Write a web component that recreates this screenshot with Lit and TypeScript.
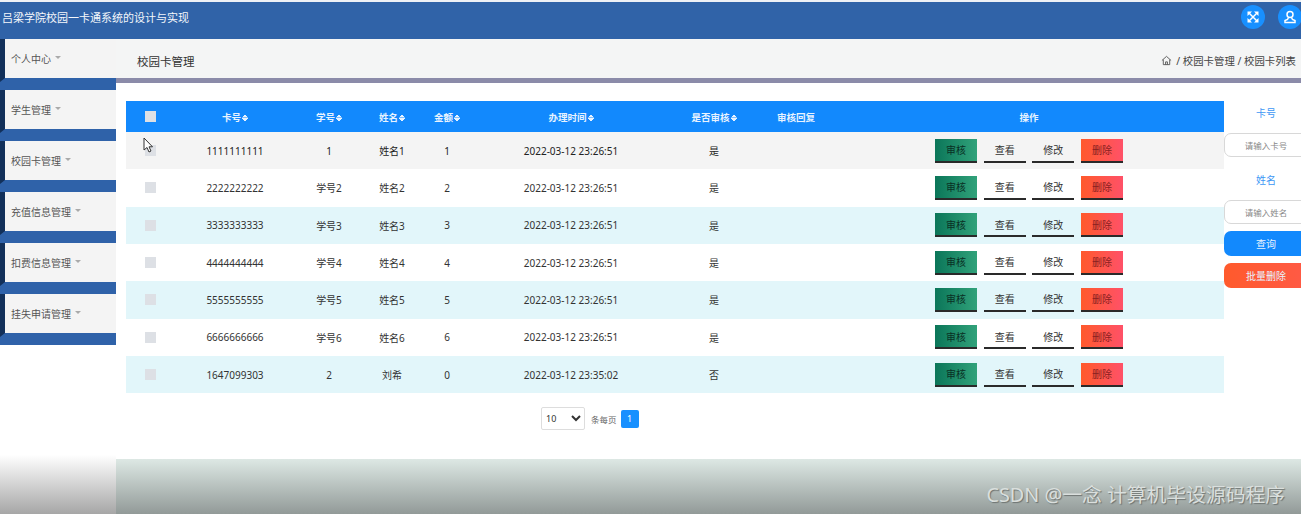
import { LitElement, html, css, svg } from "lit";
import { customElement } from "lit/decorators.js";

const rows = [
  ["1111111111", "1", "姓名1", "1", "2022-03-12 23:26:51", "是"],
  ["2222222222", "学号2", "姓名2", "2", "2022-03-12 23:26:51", "是"],
  ["3333333333", "学号3", "姓名3", "3", "2022-03-12 23:26:51", "是"],
  ["4444444444", "学号4", "姓名4", "4", "2022-03-12 23:26:51", "是"],
  ["5555555555", "学号5", "姓名5", "5", "2022-03-12 23:26:51", "是"],
  ["6666666666", "学号6", "姓名6", "6", "2022-03-12 23:26:51", "是"],
  ["1647099303", "2", "刘希", "0", "2022-03-12 23:35:02", "否"],
];
const menu = ["个人中心", "学生管理", "校园卡管理", "充值信息管理", "扣费信息管理", "挂失申请管理"];
const sort = html`<span class="sort"></span>`;

@customElement("app-root")
export class AppRoot extends LitElement {
  static styles = css`
    :host {
      display: flex;
      flex-direction: column;
      width: 1301px;
      height: 514px;
      overflow: hidden;
      position: relative;
      background: #fff;
      font-family: "Noto Sans", "Noto Sans CJK SC", sans-serif;
      font-size: 10px;
      color: #333;
    }
    .strip { height: 2px; background: #eef1f6; flex: none; }
    header {
      height: 37px;
      flex: none;
      background: #3063a8;
      display: flex;
      align-items: center;
      color: #f4f7fb;
      font-size: 11px;
      padding-left: 2px;
      padding-bottom: 7px;
      box-sizing: border-box;
    }
    .title { flex: 1; }
    .round {
      width: 24px; height: 24px; border-radius: 50%;
      background: #1890ff; display: flex; align-items: center; justify-content: center;
      margin-right: 13px;
      flex: none;
    }
    .round + .round { margin-right: -1px; }
    .round svg { width: 14px; height: 14px; fill: none; stroke: #fff; stroke-width: 1.5; }
    .round svg .solid { fill: #fff; stroke: none; }
    .body { flex: 1; display: flex; min-height: 0; }
    aside { width: 116px; flex: none; display: flex; flex-direction: column; }
    .menu { flex: 1; }
    .item { height: 51px; background: #2f62a9; position: relative; }
    .item .face {
      height: 39px;
      margin-left: 5px;
      background: #f4f4f4;
      display: flex;
      align-items: center;
      padding-left: 6px;
      font-size: 10px;
      color: #555;
      gap: 4px;
    }
    .item::before {
      content: "";
      position: absolute;
      left: 0; top: 0;
      width: 5px; height: 43px;
      background: #12305a;
      clip-path: polygon(0 0, 100% 0, 100% 39px, 0 43px);
    }
    .caret {
      width: 0; height: 0;
      border: 3px solid transparent;
      border-top-color: #aaa;
      border-bottom: none;
      margin-top: -2px;
    }
    .aside-foot { height: 59px; flex: none; background: linear-gradient(#fff, #a6a6a6); }
    main { flex: 1; min-width: 0; display: flex; flex-direction: column; }
    .crumbs {
      height: 39px; flex: none;
      background: #f4f5f5;
      display: flex; align-items: center; justify-content: space-between;
      padding: 4px 0 0 21px;
      box-sizing: border-box;
      font-size: 11.5px;
      color: #333;
    }
    .trail { display: flex; align-items: center; gap: 4px; font-size: 10.4px; color: #444; padding-right: 5px; }
    .trail svg { width: 11px; height: 11px; fill: none; stroke: #555; stroke-width: 1; }
    .rule { height: 5px; flex: none; background: #8b8ba9; }
    .content { flex: 1; display: flex; padding: 18px 0 0 10px; min-height: 0; }
    .tablewrap { width: 1098px; flex: none; }
    .row {
      display: grid;
      grid-template-columns: 48px 122px 66px 60px 50px 198px 88px 76px 390px;
      height: 37.33px;
      align-items: center;
      text-align: center;
      white-space: nowrap;
    }
    .row.head { height: 31px; background: #1289fd; color: #e8f3ff; font-weight: 600; font-size: 9.5px; }
    .row:nth-child(2) { background: #f4f4f4; color: #222; }
    .row.tint { background: #e2f6fa; }
    .cb { width: 11px; height: 11px; background: #dde0e5; display: block; margin: 0 auto; }
    .sort {
      display: inline-block; width: 6px; height: 8px; margin-left: 1px; vertical-align: -1px;
      background:
        linear-gradient(135deg, transparent 50%, #e8f3ff 50%) 0 0 / 3px 3.500px no-repeat,
        linear-gradient(225deg, transparent 50%, #e8f3ff 50%) 3px 0 / 3px 3.500px no-repeat,
        linear-gradient(45deg, transparent 50%, #e8f3ff 50%) 0 4.500px / 3px 3.500px no-repeat,
        linear-gradient(315deg, transparent 50%, #e8f3ff 50%) 3px 4.500px / 3px 3.500px no-repeat;
    }
    .ops { display: flex; justify-content: center; gap: 6.6px; }
    .op {
      width: 42px; height: 24px; box-sizing: border-box;
      border-bottom: 2px solid #2a2a2a;
      display: flex; align-items: center; justify-content: center;
      color: #333;
    }
    .op.ok { background: linear-gradient(90deg, #0b7659, #31a27a); color: #0a3024; }
    .op.del { background: linear-gradient(90deg, #ff5a2c, #ff5168); color: #8a1f1f; }
    .pager { display: flex; align-items: center; padding: 14px 0 0 415px; font-size: 8.500px; color: #666; }
    select {
      width: 44px; height: 23px; font-size: 9px; font-family: inherit;
      border: 1px solid #ddd; border-radius: 2px; background: #fff; color: #333; padding: 0;
    }
    .n {
      width: 18px; height: 18px; margin-left: 4px; border-radius: 2px;
      background: #1890ff; color: #fff; display: flex; align-items: center; justify-content: center; font-size: 9px;
    }
    .per { margin-left: 6px; }
    .panel {
      width: 84px; flex: none;
      display: flex; flex-direction: column; align-items: center;
      padding-top: 4px;
      font-size: 10px;
    }
    .label { height: 16px; line-height: 16px; color: #3d97f5; margin-bottom: 12px; }
    .label.second { margin-top: 15px; margin-bottom: 12px; }
    .input {
      width: 84px; height: 24px; box-sizing: border-box;
      border: 1px solid #d8d8d8; border-radius: 7px; background: #fff;
      display: flex; align-items: center; justify-content: center;
      color: #888; font-size: 8.500px;
    }
    .btn {
      width: 84px; height: 25px; border-radius: 7px; margin-top: 7px;
      display: flex; align-items: center; justify-content: center; color: #e8f3ff;
      background: #1289fd;
    }
    .btn.red { background: linear-gradient(90deg, #ff5a2c, #ff5a46); }
    .foot {
      height: 55px; flex: none;
      background: linear-gradient(#dde8e4, #929a98);
      display: flex; align-items: flex-end; justify-content: flex-end;
      padding: 0 16px 7px 0; box-sizing: border-box;
      font-size: 19.800px; line-height: 24px; color: #dadfdd;
      text-shadow: 1px 1px 1px #6d7371;
      white-space: nowrap;
    }
    .cursor { position: absolute; left: 143px; top: 137px; width: 10px; height: 16px; }
  `;

  render() {
    return html`
      <div class="strip"></div>
      <header>
        <div class="title">吕梁学院校园一卡通系统的设计与实现</div>
        <div class="round">
          <svg viewBox="0 0 14 14"><path d="M3 3L11 11M11 3L3 11"/><path class="solid" d="M1.500 1.500H6L1.500 6ZM12.500 1.500H8L12.500 6ZM1.500 12.500H6L1.500 8ZM12.500 12.500H8L12.500 8Z"/></svg>
        </div>
        <div class="round">
          <svg viewBox="0 0 14 14"><circle cx="7" cy="4.600" r="3"/><path d="M5.500 7.500L4.500 9.500 2 10.500V12.500H12V10.500L9.500 9.500 8.500 7.500"/></svg>
        </div>
      </header>
      <div class="body">
        <aside>
          <div class="menu">
            ${menu.map((m) => html`<div class="item"><div class="face">${m}<span class="caret"></span></div></div>`)}
          </div>
          <div class="aside-foot"></div>
        </aside>
        <main>
          <div class="crumbs">
            <span>校园卡管理</span>
            <span class="trail">
              <svg viewBox="0 0 12 12"><path d="M1 6L6 1.500 11 6M2.500 5V10.500H9.500V5M5 10.500V7.500H7V10.500"/></svg>
              / 校园卡管理 / 校园卡列表
            </span>
          </div>
          <div class="rule"></div>
          <div class="content">
            <div class="tablewrap">
              <div class="row head">
                <span><i class="cb"></i></span>
                <span>卡号${sort}</span><span>学号${sort}</span><span>姓名${sort}</span><span>金额${sort}</span>
                <span>办理时间${sort}</span><span>是否审核${sort}</span><span>审核回复</span><span>操作</span>
              </div>
              ${rows.map(
                (r, i) => html`<div class="row ${i >= 2 && i % 2 === 0 ? "tint" : ""}">
                  <span><i class="cb"></i></span>
                  <span>${r[0]}</span><span>${r[1]}</span><span>${r[2]}</span><span>${r[3]}</span><span>${r[4]}</span>
                  <span>${r[5]}</span><span></span>
                  <div class="ops">
                    <span class="op ok">审核</span><span class="op">查看</span><span class="op">修改</span><span class="op del">删除</span>
                  </div>
                </div>`
              )}
              <div class="pager">
                <select><option>10</option></select>
                <span class="per">条每页</span>
                <span class="n">1</span>
              </div>
            </div>
            <div class="panel">
              <div class="label">卡号</div>
              <div class="input">请输入卡号</div>
              <div class="label second">姓名</div>
              <div class="input">请输入姓名</div>
              <div class="btn">查询</div>
              <div class="btn red">批量删除</div>
            </div>
          </div>
          <div class="foot">CSDN @一念 计算机毕设源码程序</div>
        </main>
      </div>
      <svg class="cursor" viewBox="0 0 10 16">${svg`<path d="M1 1V13L4 10.500 6 15 8 14 6 9.800H9.500Z" fill="#fff" stroke="#333" stroke-width="1"/>`}</svg>
    `;
  }
}
